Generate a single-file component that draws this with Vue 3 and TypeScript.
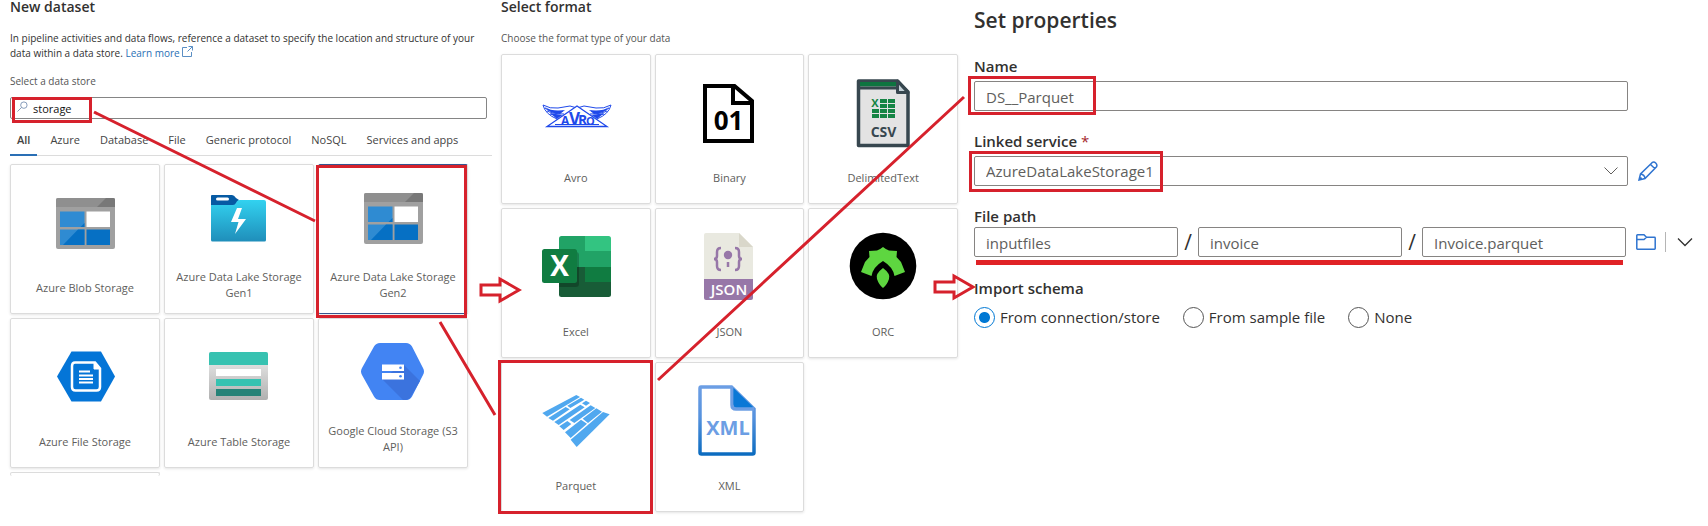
<script setup lang="ts">
import { ref } from 'vue'

interface Tile {
  id: string
  label: string
  selected?: boolean
}

const search = ref('storage')
const tabs: string[] = ['All', 'Azure', 'Database', 'File', 'Generic protocol', 'NoSQL', 'Services and apps']
const activeTab = ref('All')

const stores: Tile[] = [
  { id: 'blob', label: 'Azure Blob Storage' },
  { id: 'lake', label: 'Azure Data Lake Storage Gen1' },
  { id: 'blob', label: 'Azure Data Lake Storage Gen2', selected: true },
  { id: 'file', label: 'Azure File Storage' },
  { id: 'table', label: 'Azure Table Storage' },
  { id: 'gcs', label: 'Google Cloud Storage (S3 API)' },
]

const formats: Tile[] = [
  { id: 'avro', label: 'Avro' },
  { id: 'binary', label: 'Binary' },
  { id: 'csv', label: 'DelimitedText' },
  { id: 'excel', label: 'Excel' },
  { id: 'json', label: 'JSON' },
  { id: 'orc', label: 'ORC' },
  { id: 'parquet', label: 'Parquet' },
  { id: 'xml', label: 'XML' },
]

const datasetName = ref('DS__Parquet')
const linkedService = ref('AzureDataLakeStorage1')
const container = ref('inputfiles')
const directory = ref('invoice')
const fileName = ref('Invoice.parquet')
const schemaOptions: string[] = ['From connection/store', 'From sample file', 'None']
const schema = ref('From connection/store')
</script>

<template>
  <main class="page">
    <section class="panel stores">
      <h2 class="title">New dataset</h2>
      <p class="intro">
        In pipeline activities and data flows, reference a dataset to specify the location and structure of your data within a data store.
        <a href="#">Learn more
          <svg class="ext" viewBox="0 0 11 11" aria-hidden="true"><path d="M5 1.5H.5v9h9V6M6.500 .5h4v4M10.500 .5 5.500 5.500" /></svg></a>
      </p>
      <label class="caption" for="store-search">Select a data store</label>
      <div class="search">
        <svg viewBox="0 0 12 12" aria-hidden="true"><circle cx="7.500" cy="4.500" r="3.500" /><path d="M5 7 .5 11.500" /></svg>
        <input id="store-search" v-model="search" type="text" />
      </div>
      <nav class="tabs">
        <button v-for="t in tabs" :key="t" type="button" :class="{ active: t === activeTab }" @click="activeTab = t">{{ t }}</button>
      </nav>
      <div class="tiles">
        <button v-for="s in stores" :key="s.label" type="button" class="tile" :class="{ selected: s.selected }">
          <svg v-if="s.id === 'blob'" class="icon" viewBox="0 0 80 80">
            <rect x="11" y="16" width="59" height="51" rx="2" fill="#a0a0a0" />
            <path d="M11 25v-7q0-2 2-2h55q2 0 2 2v7z" fill="#8f8f8f" />
            <path d="M61 16h7q2 0 2 2v7H52z" fill="#787878" />
            <path d="M15 29.500h24.500V45H15zM15 47.500h24.500V63H15z" fill="#2f8bd2" />
            <path d="M39.500 41v4H35.500zM39.500 47.500V63H18L33 47.500z" fill="#0670c4" />
            <path d="M41.500 29.500H65V45H41.500z" fill="#fff" />
            <path d="M41.500 47.500H65V63H41.500z" fill="#0670c4" />
          </svg>
          <svg v-else-if="s.id === 'lake'" class="icon" viewBox="0 0 80 80">
            <defs>
              <linearGradient id="lakeFill" x1="0" y1="0" x2="0" y2="1"><stop offset="0" stop-color="#32d2f0" /><stop offset="1" stop-color="#1f8eba" /></linearGradient>
            </defs>
            <path d="M12 28v-9q0-1 1-1h20q2 0 4 3l3 2-5 6z" fill="#065aa3" />
            <path d="M12 28h22q2 0 3-2 1-3 4-3h24q2 0 2 2v38q0 1.500-1.500 1.500h-52Q12 64.500 12 63z" fill="url(#lakeFill)" />
            <rect x="17" y="20.500" width="13" height="3" rx="1.500" fill="#fff" />
            <path d="M38 31h5l-4 11h8L36 57l3.500-12H32z" fill="#fff" />
          </svg>
          <svg v-else-if="s.id === 'file'" class="icon" viewBox="0 0 80 80">
            <path d="M26.500 15.500h29.500L70 40.500 56 65.500H26.500L12 40.500z" fill="#0475d7" />
            <path d="M30 26.500h20l5 6V51q0 3.500-3.500 3.500h-21Q27 54.500 27 51V30q0-3.500 3-3.500z" fill="none" stroke="#fff" stroke-width="2.500" />
            <path d="M49 26v7h6.500" fill="#fff" stroke="#fff" />
            <path d="M34 35.500h11M34 39.500h14M34 43h14M34 46.500h14" stroke="#fff" stroke-width="2" />
          </svg>
          <svg v-else-if="s.id === 'table'" class="icon" viewBox="0 0 80 80">
            <defs>
              <linearGradient id="tableFill" x1="0" y1="0" x2="0" y2="1"><stop offset=".2" stop-color="#e2e2e2" /><stop offset="1" stop-color="#b0b0b0" /></linearGradient>
            </defs>
            <rect x="10" y="16" width="59" height="48" rx="2" fill="url(#tableFill)" />
            <path d="M10 29V18q0-2 2-2h55q2 0 2 2v11z" fill="#37c2b1" />
            <path d="M17 33h45v7H17z" fill="#fff" />
            <path d="M17 43h45v7H17z" fill="#37c2b1" />
            <path d="M17 53h45v7H17z" fill="#258277" />
          </svg>
          <svg v-else class="icon" viewBox="0 0 80 80">
            <path d="M27 12h26q4 0 6 3.500L70 37q2 3.500 0 7L59 65.500Q57 69 53 69H27q-4 0-6-3.500L9 44q-2-3.500 0-7l12-21.500Q23 12 27 12z" fill="#4284f3" />
            <path d="M50 33 67 50 57 67q-2 2-4 2H50L29 48z" fill="#3b73de" />
            <path d="M29 33.500h22V40H29zM29 42h22v6.500H29z" fill="#fff" />
            <circle cx="47.500" cy="36.700" r="1.300" fill="#4284f3" /><circle cx="47.500" cy="45.200" r="1.300" fill="#4284f3" />
          </svg>
          <span>{{ s.label }}</span>
        </button>
        <div class="tile peek"></div>
      </div>
    </section>

    <section class="panel formats">
      <h2 class="title">Select format</h2>
      <p class="intro muted">Choose the format type of your data</p>
      <div class="tiles">
        <button v-for="f in formats" :key="f.id" type="button" class="tile">
          <svg v-if="f.id === 'avro'" class="icon" viewBox="0 0 80 80">
            <g fill="none" stroke="#1f49ea" stroke-width="1">
              <path d="M7 33q7 4 15 3l12-2 7 2M7 33q2 9 14 14M9 36q5 5 18 3M11 39q6 3 17 3M14 42q6 2 12 2" />
              <path d="M75 33q-7 4-15 3l-12-2-7 2M75 33q-2 9-14 14M73 36q-5 5-18 3M71 39q-6 3-17 3M68 42q-6 2-12 2" />
            </g>
            <path d="M9 35q7 5 20 3l-5 4q-10 0-15-7zM73 35q-7 5-20 3l5 4q10 0 15-7zM14 41l12 2-5 4zM68 41l-12 2 5 4z" fill="#1f49ea" />
            <path d="M11 54.500h60L41 34z" fill="#fff" stroke="#1f49ea" stroke-width="1.300" />
            <path d="M19 52.500h44" stroke="#1f49ea" />
            <text x="25" y="53" font-size="12" font-weight="700" fill="#1f49ea">A</text>
            <text x="33" y="53" font-size="17" font-weight="700" fill="#1f49ea">V</text>
            <text x="42" y="53" font-size="14" font-weight="700" fill="#1f49ea">R</text>
            <text x="50" y="53" font-size="11" font-weight="700" fill="#1f49ea">O</text>
          </svg>
          <svg v-else-if="f.id === 'binary'" class="icon" viewBox="0 0 80 80">
            <path d="M16 14h29.500L63 29v40H16z" fill="#fff" stroke="#000" stroke-width="4" />
            <path d="M44 14v17h19" fill="none" stroke="#000" stroke-width="4" />
            <text x="39.500" y="58" text-anchor="middle" font-size="26" font-weight="700">01</text>
          </svg>
          <svg v-else-if="f.id === 'csv'" class="icon" viewBox="0 0 80 80">
            <path d="M15.500 9h39L65 20v53.500H15.500z" fill="#e3e3e3" stroke="#37474f" stroke-width="3.500" stroke-linejoin="round" />
            <path d="M17 10h38v4.500H17z" fill="#0e7440" /><path d="M16 16h40" stroke="#37474f" stroke-width="3" />
            <path d="M54.500 9v11.500H65z" fill="#c5d2d8" stroke="#37474f" stroke-width="3" stroke-linejoin="round" />
            <path d="M37 27h7v4h-7zM45 27h7v4h-7zM37 32h7v4h-7zM45 32h7v4h-7zM29 37h7v4h-7zM37 37h7v4h-7zM45 37h7v4h-7zM29 42h7v4h-7zM37 42h7v4h-7zM45 42h7v4h-7z" fill="#158544" />
            <text x="32" y="35" text-anchor="middle" font-size="11" font-weight="700" fill="#158544">X</text>
            <text x="40.500" y="65" text-anchor="middle" font-size="14" font-weight="700" fill="#37474f">CSV</text>
          </svg>
          <svg v-else-if="f.id === 'excel'" class="icon" viewBox="0 0 80 80">
            <path d="M23 40h52v28.500q0 2.500-2.500 2.500h-47Q23 71 23 68.500z" fill="#185c37" />
            <path d="M23 25V12.500q0-2.500 2.500-2.500H49v31H23z" fill="#21a366" />
            <path d="M49 10h23.500q2.500 0 2.500 2.500V25H49z" fill="#33c481" />
            <path d="M49 25h26v16H49z" fill="#21a366" /><path d="M49 41h26v15H49z" fill="#107c41" />
            <path d="M23 26h17q3 0 3 3v29q0 3-3 3H23z" fill="#000" opacity=".22" />
            <rect x="6" y="23" width="35" height="34" rx="2.500" fill="#107c41" />
            <text x="23.500" y="50" text-anchor="middle" font-size="28" font-weight="700" fill="#fff">X</text>
          </svg>
          <svg v-else-if="f.id === 'json'" class="icon" viewBox="0 0 80 80">
            <path d="M15 53V9q0-2 2-2h33l14 14v32z" fill="#e9e9e0" /><path d="M50 7v14h14z" fill="#d9d7ca" />
            <path d="M15 53h49v19q0 2-2 2H17q-2 0-2-2z" fill="#9777a8" />
            <path d="M32 22q-4 0-4 4v4q0 3-3 3 3 0 3 3v4q0 4 4 4M46 22q4 0 4 4v4q0 3 3 3-3 0-3 3v4q0 4-4 4" fill="none" stroke="#9777a8" stroke-width="2.500" />
            <circle cx="39" cy="29" r="4.200" fill="#9777a8" /><path d="M39 36v5" stroke="#9777a8" stroke-width="2.500" />
            <text x="40" y="69" text-anchor="middle" font-size="15" font-weight="600" fill="#fff">JSON</text>
          </svg>
          <svg v-else-if="f.id === 'orc'" class="icon" viewBox="0 0 80 80">
            <circle cx="40" cy="40" r="33.300" />
            <path d="M40 21q3 2.500 6 3.500l8 .5-.5 6 4.500 5 4 10-10.500 4Q50 41 40 35 30 41 28.500 50L18 46l4-10 4.500-5-.5-6 8-.5q3-1 6-3.500z" fill="#5ed640" />
            <path d="M40 42q8 6 6 11-2 6-6 9-4-3-6-9-2-5 6-11z" fill="#5ed640" />
          </svg>
          <svg v-else-if="f.id === 'parquet'" class="icon" viewBox="3 -15 240 240" fill="#50a8ef">
            <path d="M22 84 124 30l11 6L36 95z" />
            <path d="M40 99 92 66l12 7-50 34zM97 62l41-24 10 6-42 25z" />
            <path d="m58 111 78-52 13 8-78 53zM141 55l12-8 12 7-12 8z" />
            <path d="m73 124 24-16 12 9-23 18zM104 105l63-44 14 8-63 45z" />
            <path d="m90 142 48-38 18 12-49 43zM143 101l41-31 17 10-42 34z" />
            <path d="m107 164 97-83 20 7-99 98z" />
          </svg>
          <svg v-else class="icon" viewBox="0 0 80 80">
            <defs>
              <linearGradient id="xmlLine" x1="0" y1="0" x2="0" y2="1"><stop offset="0" stop-color="#6c9ee4" /><stop offset=".45" stop-color="#5692de" /><stop offset="1" stop-color="#0c6cc0" /></linearGradient>
            </defs>
            <path d="M12 7h30.500L65 29v43.500q0 1.500-1.500 1.500H12.500Q11 74 11 72.500V8.500Q11 7 12 7z" fill="#fff" stroke="url(#xmlLine)" stroke-width="3.500" />
            <path d="M43 7v18q0 4 4 4h18" fill="#0a78d6" stroke="#6c9ee4" stroke-width="3.500" /><path d="M44.500 8 64 27H48q-3.500 0-3.500-3.500z" fill="#0a78d6" />
            <text x="39" y="55" text-anchor="middle" font-size="20" font-weight="700" fill="#6c9ee4">XML</text>
          </svg>
          <span>{{ f.label }}</span>
        </button>
      </div>
    </section>

    <form class="panel props" @submit.prevent>
      <h1>Set properties</h1>
      <label class="name" for="ds-name">Name</label>
      <div class="row">
        <input id="ds-name" v-model="datasetName" class="field" type="text" />
        <div class="actions"></div>
      </div>
      <label class="name" for="linked">Linked service <b>*</b></label>
      <div class="row">
        <div class="select">
          <select id="linked" v-model="linkedService" class="field">
            <option>AzureDataLakeStorage1</option>
          </select>
          <svg viewBox="0 0 14 8" aria-hidden="true"><path d="m.5.500 6.500 6.500L13.500.500" /></svg>
        </div>
        <div class="actions">
          <button type="button" aria-label="Edit linked service">
            <svg class="blue" viewBox="0 0 20 20"><path d="M1 19l1.500-6L14 1.700q1.800-1.500 3.700.300t.800 3.800L7 17.500zM12.500 3.500l4.500 4.300M2.500 13q4 .5 4.500 4.500M1 19l2.500-2.500" /></svg>
          </button>
        </div>
      </div>
      <label class="name" for="container">File path</label>
      <div class="row path">
        <input id="container" v-model="container" class="field" type="text" />
        <span class="slash">/</span>
        <input v-model="directory" class="field" type="text" aria-label="Directory" />
        <span class="slash">/</span>
        <input v-model="fileName" class="field" type="text" aria-label="File name" />
        <div class="actions wide">
          <button type="button" aria-label="Browse">
            <svg class="blue" viewBox="0 0 20 20"><path d="M.8 16.500v-13q0-.7.700-.7h6.500l2.500 2.500h8q.700 0 .7.700v10.500q0 .7-.7.700H1.500q-.7 0-.7-.7zM.8 7.500H8l2.500-2.200" /></svg>
          </button>
          <i class="bar"></i>
          <button type="button" aria-label="More">
            <svg class="dark" viewBox="0 0 20 20"><path d="m3 6.500 7 7 7-7" /></svg>
          </button>
        </div>
      </div>
      <fieldset>
        <legend>Import schema</legend>
        <label v-for="o in schemaOptions" :key="o"><input v-model="schema" type="radio" name="schema" :value="o" />{{ o }}</label>
      </fieldset>
    </form>

    <svg class="marks" viewBox="0 0 1708 526" preserveAspectRatio="none" aria-hidden="true">
      <rect x="13.500" y="98.500" width="77" height="23" />
      <rect x="317.500" y="166.500" width="148" height="150" />
      <rect x="499.500" y="361.500" width="152" height="151" />
      <rect x="969.500" y="77.500" width="125" height="36" />
      <rect x="970.500" y="152.500" width="191" height="38" />
      <path d="M94 112 315 221M440 322l55 93M658 380 964 97" />
      <path d="M481 285h19v-6l19 11-19 11v-6h-19zM935 282h19v-6l19 11-19 11v-6h-19z" />
      <path class="thick" d="M976 262.500h647" />
    </svg>
  </main>
</template>

<style>
body { margin: 0; background: #fff; }
</style>

<style scoped>
.page {
  position: relative;
  display: grid;
  grid-template-columns: minmax(0, 492fr) minmax(0, 474fr) minmax(0, 742fr);
  min-height: 526px;
  font-family: "Open Sans", "Noto Sans", sans-serif;
  font-size: 11px;
  color: #323130;
}
.page * { box-sizing: border-box; }
button, input, select { font-family: inherit; font-size: inherit; color: inherit; margin: 0; }
button { background: none; border: 0; padding: 0; cursor: pointer; }
.title { margin: 0; font-size: 14px; font-weight: 600; line-height: 14px; }
.stores { padding-left: 10px; }
.formats { padding: 0 8px 0 9px; }
.intro { margin: 17px 0 0; padding-right: 4px; font-size: 10px; line-height: 15px; }
.intro a { color: #2a6fb5; text-decoration: none; }
.ext { width: 11px; height: 11px; fill: none; stroke: #5b8fc4; }
.muted { color: #555; }
.caption { display: block; margin-top: 12px; font-size: 10px; line-height: 16px; color: #555; }
.search {
  display: flex;
  align-items: center;
  gap: 5px;
  height: 22px;
  margin: 8px 5px 0 0;
  padding-left: 6px;
  border: 1px solid #858585;
  border-radius: 2px;
}
.search svg { width: 11px; height: 11px; margin-bottom: 3px; fill: none; stroke: #7c93b4; }
.search input { flex: 1; min-width: 0; height: 18px; border: 0; padding: 0; outline: 0; color: #111; }
.tabs { display: flex; gap: 6px; border-bottom: 1px solid #dcdcdc; }
.tabs button { height: 37px; padding: 5px 7px 0; color: #444; white-space: nowrap; border-bottom: 2px solid transparent; margin-bottom: -1px; }
.tabs .active { font-weight: 600; border-color: #2a6fb5; }
.tiles { display: grid; grid-template-columns: repeat(3, minmax(0, 1fr)); gap: 4px; }
.stores .tiles { margin: 8px 24px 0 0; }
.formats .tiles { margin-top: 8px; }
.tile {
  display: flex;
  flex-direction: column;
  align-items: center;
  justify-content: space-evenly;
  height: 150px;
  min-width: 0;
  padding: 0 5px;
  border: 1px solid #dcdcdc;
  border-radius: 2px;
  box-shadow: 0 1px 3px #0000001c;
  line-height: 16px;
  color: #605e5c;
}
.tile.selected { border-top-color: #35558f; border-bottom-color: #35558f; }
.tile.peek { height: 4px; border-bottom: 0; box-shadow: none; }
.icon { width: 80px; height: 80px; flex: none; }
.props { padding-left: 8px; font-size: 15px; }
.props h1 { margin: 6px 0 0; font-size: 21px; font-weight: 600; line-height: 28px; }
.name { display: block; line-height: 20px; font-weight: 600; }
.name b { color: #a4262c; font-weight: 400; }
h1 + .name { margin-top: 22px; }
.row { display: flex; align-items: center; margin-top: 5px; }
.row + .name { margin-top: 20px; }
.row.path { margin-top: 1px; }
.field { flex: 1; width: 100%; min-width: 0; height: 30px; padding: 1px 11px 0; border: 1px solid #868482; border-radius: 2px; background: #fff; color: #605e5c; outline: 0; appearance: none; }
select.field { padding-top: 0; }
.select { flex: 1; position: relative; display: flex; }
.select svg { position: absolute; right: 10px; top: 11px; width: 14px; height: 8px; fill: none; stroke: #605e5c; pointer-events: none; }
.slash { width: 20px; text-align: center; font-size: 21px; line-height: 30px; }
.actions { display: flex; align-items: center; gap: 9px; width: 80px; padding-left: 10px; }
.actions.wide { width: 82px; }
.actions button, .actions svg { display: block; width: 20px; height: 20px; fill: none; }
.blue { stroke: #2f74d0; stroke-width: 1.5; }
.dark { stroke: #323130; stroke-width: 1.3; }
.bar { width: 1px; height: 20px; background: #b5b5b5; }
fieldset { display: flex; gap: 23px; margin: 21px 0 0; padding: 0; border: 0; font-size: 15px; }
legend { padding: 0; line-height: 20px; font-weight: 600; margin-bottom: 9px; }
fieldset label { display: flex; align-items: center; gap: 5px; line-height: 21px; white-space: nowrap; }
input[type="radio"] { appearance: none; width: 21px; height: 21px; border: 1px solid #555; border-radius: 50%; background: #fff; }
input[type="radio"]:checked { border-color: #0078d4; background: radial-gradient(circle, #0078d4 0 5px, #fff 6px); }
.marks { position: absolute; top: 0; left: 0; width: 100%; height: 526px; fill: none; stroke: #d6212c; stroke-width: 3; pointer-events: none; }
.marks .thick { stroke: #e02226; stroke-width: 5; }
</style>
